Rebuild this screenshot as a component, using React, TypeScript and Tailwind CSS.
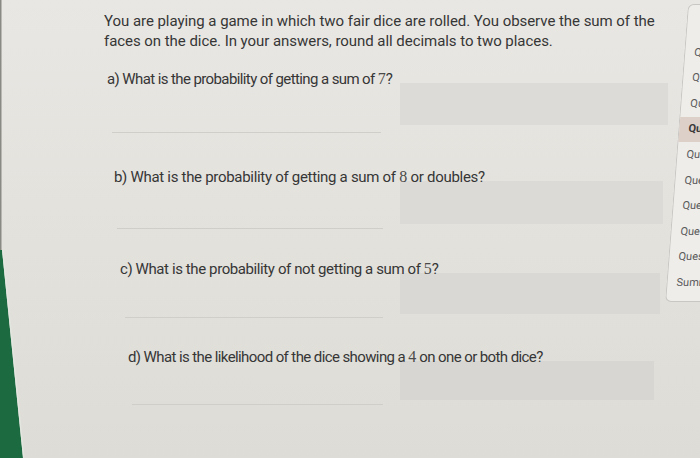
import React from "react";

const num = "font-['Liberation_Serif',serif] text-[16px] tracking-normal text-[#4a4a4a]";

function Row({
  children,
  rowCls,
  textCls,
  lineCls,
  boxCls,
}: {
  children: React.ReactNode;
  rowCls: string;
  textCls: string;
  lineCls: string;
  boxCls: string;
}) {
  return (
    <section className={rowCls}>
      <p className={"relative z-10 leading-[16px] whitespace-nowrap " + textCls}>{children}</p>
      <div className="flex -mt-[4px]">
        <div className={"w-[400px] shrink-0 " + lineCls}>
          <div className="h-px bg-[#cfcec9]" />
        </div>
        <div className={boxCls} />
      </div>
    </section>
  );
}

const items = [
  "Question 1",
  "Question 2",
  "Question 3",
  "Question 4",
  "Question 5",
  "Question 6",
  "Question 7",
  "Question 8",
  "Question 9",
  "Summary",
];

export default function App() {
  return (
    <div className="relative w-[700px] h-[458px] overflow-hidden flex bg-linear-to-b from-[#e9e7e3] to-[#dddcd6] font-['Roboto','Liberation_Sans',sans-serif] text-[15px] text-[#363636]">
      <main className="w-[688px] shrink-0 pt-[11px]">
        <p className="relative z-10 pl-[104px] leading-[20px] tracking-[-0.05px] whitespace-nowrap">
          You are playing a game in which two fair dice are rolled. You observe the sum of the
          <br />
          faces on the dice. In your answers, round all decimals to two places.
        </p>

        <Row
          rowCls="mt-[20px]"
          textCls="pl-[107px] tracking-[-0.6px]"
          lineCls="pl-[112px] pr-[19px] pt-[49px]"
          boxCls="w-[268px] h-[42px] bg-[#dcdbd8]"
        >
          a) What is the probability of getting a sum of <span className={num}>7</span>?
        </Row>
        <Row
          rowCls="mt-[36px]"
          textCls="pl-[114px] tracking-[-0.3px]"
          lineCls="pl-[117px] pr-[17px] pt-[47px]"
          boxCls="w-[263px] h-[43px] bg-[#dbdad7]"
        >
          b) What is the probability of getting a sum of <span className={num}>8</span> or doubles?
        </Row>
        <Row
          rowCls="mt-[32px]"
          textCls="pl-[120px] tracking-[-0.4px]"
          lineCls="pl-[125px] pr-[17px] pt-[44px]"
          boxCls="w-[260px] h-[41px] bg-[#d9d8d5]"
        >
          c) What is the probability of not getting a sum of <span className={num}>5</span>?
        </Row>
        <Row
          rowCls="mt-[31px]"
          textCls="pl-[128px] tracking-[-0.6px]"
          lineCls="pl-[132px] pr-[17px] pt-[43px]"
          boxCls="w-[254px] h-[39px] bg-[#d7d6d2]"
        >
          d) What is the likelihood of the dice showing a <span className={num}>4</span> on one or both dice?
        </Row>
      </main>

      <aside className="w-[40px] shrink-0 mt-[4px] h-[298px] origin-top-left -skew-x-[4.4deg] bg-[#eeedea] border-l border-t border-b border-[#c8c7c3] rounded-tl-[6px] rounded-bl-[6px] pt-[35px] text-[11px] text-[#5a5a5a]">
        {items.map((t, i) => (
          <div
            key={t}
            className={
              "h-[25.6px] flex items-center pl-[9px] whitespace-nowrap " +
              (i === 3 ? "bg-[#ddd0c9] font-bold text-[#3a3a3a]" : "")
            }
          >
            {t}
          </div>
        ))}
      </aside>

      <svg
        className="absolute left-0 top-0 pointer-events-none"
        width="30"
        height="458"
        viewBox="0 0 30 458"
      >
        <rect x="0" y="0" width="1.5" height="252" fill="#8a8a84" />
        <polygon points="0,250 2,250 23,458 0,458" fill="#1b6a40" />
        <polygon points="2,250 3.5,250 24.5,458 23,458" fill="#e2e6df" />
      </svg>
    </div>
  );
}
